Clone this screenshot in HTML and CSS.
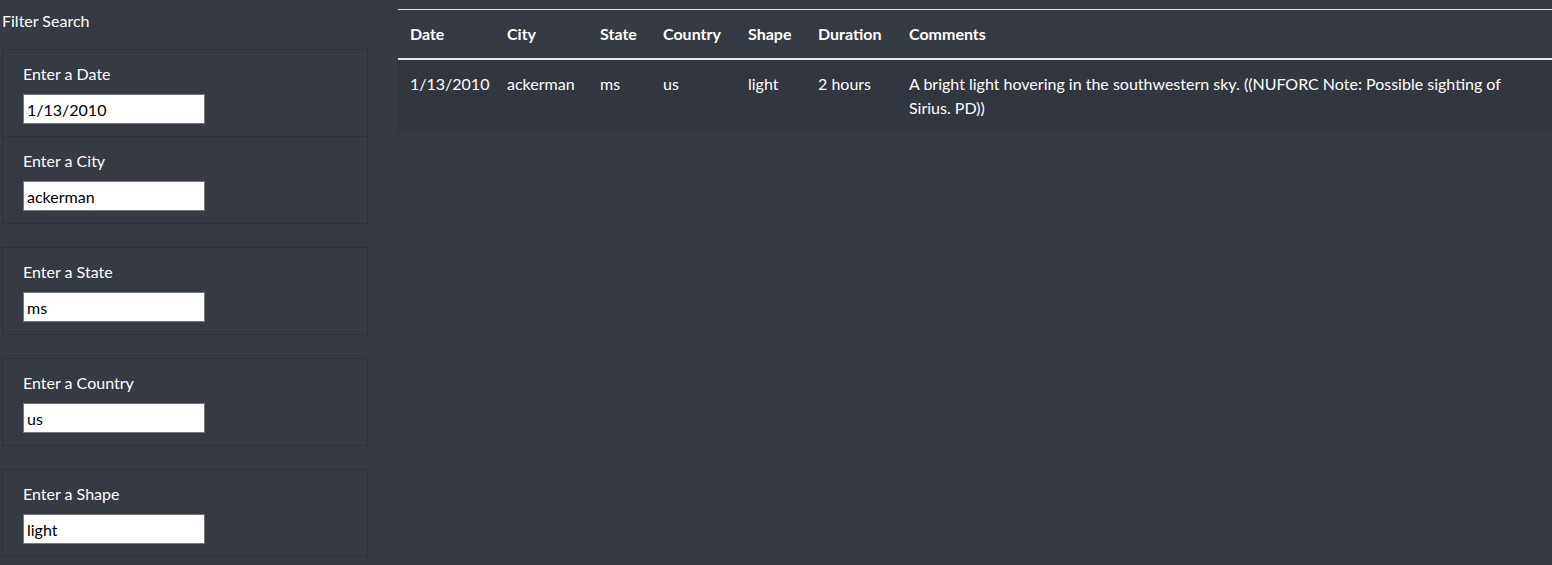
FILE: index.html
```html
<!DOCTYPE html>
<html lang="en">
<head>
<meta charset="utf-8">
<title>UFO Sightings</title>
<link rel="stylesheet" href="styles.css">
</head>
<body>
<div class="page">
  <aside class="sidebar">
    <div class="filter-title">Filter Search</div>
    <ul class="filters">
      <li class="filter-group">
        <div class="filter-item">
          <label class="filter-label" for="date">Enter a Date</label>
          <input class="filter-input" id="date" type="text" value="1/13/2010">
        </div>
        <div class="filter-item">
          <label class="filter-label" for="city">Enter a City</label>
          <input class="filter-input" id="city" type="text" value="ackerman">
        </div>
      </li>
      <li class="filter-group">
        <div class="filter-item">
          <label class="filter-label" for="state">Enter a State</label>
          <input class="filter-input" id="state" type="text" value="ms">
        </div>
      </li>
      <li class="filter-group">
        <div class="filter-item">
          <label class="filter-label" for="country">Enter a Country</label>
          <input class="filter-input" id="country" type="text" value="us">
        </div>
      </li>
      <li class="filter-group">
        <div class="filter-item">
          <label class="filter-label" for="shape">Enter a Shape</label>
          <input class="filter-input" id="shape" type="text" value="light">
        </div>
      </li>
    </ul>
  </aside>
  <main class="results">
    <table class="ufo-table">
      <colgroup>
        <col class="c-date">
        <col class="c-city">
        <col class="c-state">
        <col class="c-country">
        <col class="c-shape">
        <col class="c-duration">
        <col class="c-comments">
      </colgroup>
      <thead>
        <tr>
          <th>Date</th>
          <th>City</th>
          <th>State</th>
          <th>Country</th>
          <th>Shape</th>
          <th>Duration</th>
          <th>Comments</th>
        </tr>
      </thead>
      <tbody>
        <tr class="odd">
          <td>1/13/2010</td>
          <td>ackerman</td>
          <td>ms</td>
          <td>us</td>
          <td>light</td>
          <td>2 hours</td>
          <td>A bright light hovering in the southwestern sky. ((NUFORC Note: Possible sighting of Sirius. PD))</td>
        </tr>
      </tbody>
    </table>
  </main>
</div>
</body>
</html>
```

FILE: styles.css
```css
html, body {
  margin: 0;
  padding: 0;
}

body {
  background: #363a42;
  color: #ffffff;
  font-family: Lato, "Open Sans", "Liberation Sans", sans-serif;
  font-size: 16px;
  line-height: 24px;
  height: 565px;
  overflow: hidden;
}

.page {
  display: flex;
  align-items: flex-start;
  gap: 30px;
}

.sidebar {
  width: 366px;
  flex: 0 0 366px;
  padding-left: 2px;
  padding-top: 9px;
}

.filter-title {
  height: 24px;
  line-height: 24px;
  margin-bottom: 16px;
}

.filters {
  list-style: none;
  margin: 0;
  padding: 0;
  display: flex;
  flex-direction: column;
  gap: 23px;
}

.filter-group {
  border: 1px solid rgba(0, 0, 0, 0.14);
}

.filter-item {
  padding: 12px 20px 12px 20px;
  display: flex;
  flex-direction: column;
  align-items: flex-start;
  gap: 8px;
}

.filter-item + .filter-item {
  border-top: 1px solid rgba(0, 0, 0, 0.14);
}

.filter-label {
  display: block;
  line-height: 24px;
}

.filter-input {
  box-sizing: border-box;
  width: 182px;
  height: 30px;
  margin: 0;
  padding: 1px 3px;
  border: 1px solid #767676;
  background: #ffffff;
  color: #000000;
  font-family: Lato, "Open Sans", "Liberation Sans", sans-serif;
  font-size: 16px;
  outline: none;
}

.results {
  flex: 1 1 auto;
  padding-top: 9px;
  min-width: 0;
}

.ufo-table {
  width: 100%;
  border-collapse: collapse;
  table-layout: fixed;
}

.c-date { width: 97px; }
.c-city { width: 93px; }
.c-state { width: 63px; }
.c-country { width: 85px; }
.c-shape { width: 70px; }
.c-duration { width: 91px; }

.ufo-table th,
.ufo-table td {
  padding: 12px;
  text-align: left;
  vertical-align: top;
  line-height: 24px;
}

.ufo-table th {
  font-weight: 700;
  border-top: 1px solid #dee2e6;
  border-bottom: 2px solid #dee2e6;
}

.ufo-table tbody tr.odd {
  background: rgba(0, 0, 0, 0.06);
}
```
